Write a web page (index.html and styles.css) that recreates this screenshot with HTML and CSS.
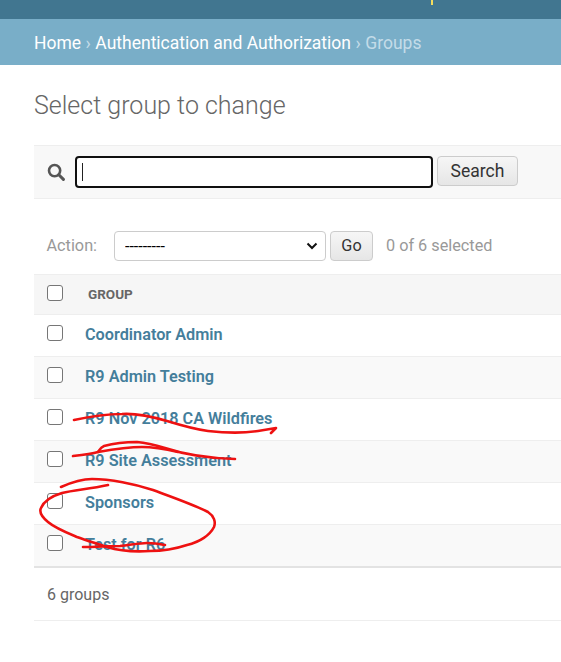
FILE: index.html
```html
<!DOCTYPE html>
<html lang="en">
<head>
<meta charset="utf-8">
<title>Select group to change</title>
<link rel="stylesheet" href="styles.css">
</head>
<body>
<div class="header"><span class="tick"></span></div>
<nav class="breadcrumbs"><a href="#">Home</a><span class="sep">›</span><a href="#">Authentication and Authorization</a><span class="sep">›</span><span class="current">Groups</span></nav>
<main class="content">
  <h1>Select group to change</h1>
  <form class="toolbar">
    <svg class="search-icon" viewBox="0 0 18 18" width="18" height="18"><circle cx="7.6" cy="7.6" r="5.6" fill="none" stroke="#555" stroke-width="2.6"/><path d="M11.8 11.8l4.6 4.6" stroke="#555" stroke-width="3" stroke-linecap="round"/></svg>
    <div class="search-input"><span class="caret"></span></div>
    <button type="button" class="btn search-btn">Search</button>
  </form>
  <div class="actions">
    <span class="action-label">Action:</span>
    <select class="action-select"><option>---------</option></select>
    <button type="button" class="btn go-btn">Go</button>
    <span class="counter">0 of 6 selected</span>
  </div>
  <div class="table">
    <div class="row head"><span class="check"></span><span class="col-title">GROUP</span></div>
    <div class="row"><span class="check"></span><a href="#">Coordinator Admin</a></div>
    <div class="row alt"><span class="check"></span><a href="#">R9 Admin Testing</a></div>
    <div class="row"><span class="check"></span><a href="#">R9 Nov 2018 CA Wildfires</a></div>
    <div class="row alt"><span class="check"></span><a href="#">R9 Site Assessment</a></div>
    <div class="row"><span class="check"></span><a href="#">Sponsors</a></div>
    <div class="row alt"><span class="check"></span><a href="#">Test for R6</a></div>
  </div>
  <p class="paginator">6 groups</p>
</main>
<svg class="ink" viewBox="0 0 561 662" width="561" height="662" fill="none" stroke="#ee1111" stroke-width="2.6" stroke-linecap="round" stroke-linejoin="round">
  <path d="M74 420C88 417 105 414 122 414C137 413 150 416 167 421C180 425 193 429 208 431C226 433 245 433 258 431C264 430 270 429 276 428L271 433"/>
  <path d="M73 456C83 455 92 454 98 452C100 449 101 447 104 446C115 443 127 442 137 442C148 443 155 445 165 448C180 453 200 458 235 459"/>
  <path d="M98 452C115 449 130 447 142 447C155 447 165 449 178 452"/>
  <path d="M61 487C70 483 80 479 92 479C110 479 135 484 153 490C172 497 195 505 208 512C214 516 216 522 214 527C210 535 200 542 187 545C175 549 165 551 150 551C135 552 120 551 107 547C95 543 85 540 77 537C65 532 55 528 48 522C42 517 39 512 41 508C44 501 52 496 62 493C75 490 90 489 108 485"/>
  <path d="M83 547C95 547 110 546 120 546C130 545 140 543 147 543C153 543 160 544 165 545"/>
</svg>
</body>
</html>
```
FILE: styles.css
```css
* { box-sizing: border-box; }
html, body { margin: 0; padding: 0; }
body {
  width: 561px;
  height: 662px;
  overflow: hidden;
  position: relative;
  background: #fff;
  font-family: Roboto, "Liberation Sans", sans-serif;
  color: #333;
}
.header {
  height: 19px;
  background: #417690;
  padding-left: 431px;
}
.tick {
  display: block;
  width: 2px;
  height: 5px;
  background: #f5dd5d;
}
.breadcrumbs {
  height: 46px;
  background: #79aec8;
  padding: 2px 0 0 34px;
  display: flex;
  align-items: center;
  font-size: 17.5px;
  font-weight: 400;
  color: #c4dce8;
}
.breadcrumbs a { color: #fff; text-decoration: none; }
.sep { padding: 0 4.5px; }
.current { color: #c4dce8; }
.content { padding: 28px 0 0 34px; width: 561px; }
h1 {
  margin: 0 0 26px;
  font-size: 25px;
  line-height: 26px;
  font-weight: 300;
  color: #666;
}
.toolbar {
  height: 54px;
  margin-right: -60px;
  background: #f8f8f8;
  border-top: 1px solid #eee;
  border-bottom: 1px solid #eee;
  display: flex;
  align-items: center;
  padding: 0 0 1px 13px;
}
.search-icon { flex: none; margin-right: 10px; }
.search-input {
  width: 358px;
  height: 32px;
  background: #fff;
  border: 2px solid #101010;
  border-radius: 4px;
  display: flex;
  align-items: center;
  padding-left: 5px;
}
.caret { width: 1px; height: 18px; background: #222; }
.btn {
  font-family: inherit;
  color: #333;
  background: linear-gradient(#f6f6f6, #e6e6e6);
  border: 1px solid #ccc;
  border-radius: 4px;
  padding: 0;
  cursor: pointer;
}
.search-btn { width: 81px; height: 30px; margin: 0 0 2px 4px; font-size: 17.5px; }
.actions {
  height: 75px;
  display: flex;
  align-items: center;
  padding: 18px 0 0 12.5px;
  font-size: 16.25px;
  color: #999;
}
.action-label { width: 67.5px; }
.action-select {
  width: 212px;
  height: 30px;
  font-family: inherit;
  font-size: 16px;
  color: #000;
  appearance: none;
  background: #fff url("data:image/svg+xml,%3Csvg xmlns='http://www.w3.org/2000/svg' width='12' height='8' viewBox='0 0 12 8'%3E%3Cpath d='M1.5 1.5L6 6l4.5-4.5' fill='none' stroke='%23111' stroke-width='2'/%3E%3C/svg%3E") no-repeat right 7px center;
  border: 1px solid #ccc;
  border-radius: 4px;
  padding: 1px 0 0 10px;
}
.go-btn { width: 43px; height: 30px; margin-left: 4px; font-size: 16.25px; }
.counter { margin-left: 13px; }
.table { border-bottom: 2px solid #e3e3e3; margin-right: -60px; }
.row {
  height: 42px;
  display: flex;
  align-items: center;
  padding: 0 0 2px 13px;
  border-top: 1px solid #eee;
  font-size: 16.25px;
  font-weight: 600;
}
.row a { color: #447e9b; text-decoration: none; margin-left: 22px; }
.alt { background: #f9f9f9; }
.head { height: 40px; padding-bottom: 2px; background: #f6f6f6; }
.check {
  flex: none;
  width: 16px;
  height: 16px;
  background: #fff;
  border: 1px solid #767676;
  border-radius: 3px;
  position: relative;
  top: -2px;
}
.head .check { top: -1px; }
.col-title {
  margin-left: 25px;
  font-size: 13.5px;
  font-weight: 700;
  color: #666;
}
.paginator {
  height: 53px;
  margin: 0 -60px 0 0;
  padding-left: 13px;
  display: flex;
  align-items: center;
  border-bottom: 1px solid #eee;
  font-size: 16px;
  color: #666;
}
.ink { position: absolute; left: 0; top: 0; pointer-events: none; }
```
